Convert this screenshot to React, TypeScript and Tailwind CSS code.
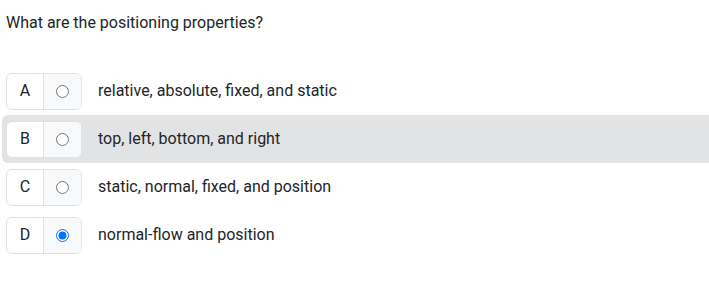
const options = [
  { key: 'A', text: 'relative, absolute, fixed, and static' },
  { key: 'B', text: 'top, left, bottom, and right' },
  { key: 'C', text: 'static, normal, fixed, and position' },
  { key: 'D', text: 'normal-flow and position' },
];

const App = () => {
  const hovered = 'B';
  const selected = 'D';

  return (
    <div className="w-[709px] h-[290px] bg-white text-[#212529] font-['Roboto',sans-serif] overflow-hidden">
      <p className="pl-[6px] pt-[11px] text-[16px] leading-[24px]">What are the positioning properties?</p>

      <div className="mt-[32px] pl-[2px]">
        {options.map((o) => (
          <div
            key={o.key}
            className={`flex items-center h-[48px] pl-[4px] rounded-l-[6px] ${o.key === hovered ? 'bg-[#e2e3e5]' : ''}`}
          >
            <div className="flex h-[37px] w-[76px] border border-[#dee2e6] rounded-[6px] overflow-hidden bg-white">
              <div className="w-[37px] flex items-center justify-center text-[16px] border-r border-[#dee2e6]">
                {o.key}
              </div>
              <div className="flex-1 flex items-center justify-center bg-[#f8f9fa]">
                <input
                  type="radio"
                  name="answer"
                  checked={o.key === selected}
                  readOnly
                  className="m-0 w-[13px] h-[13px]"
                />
              </div>
            </div>
            <span className="ml-[16px] text-[16px]">{o.text}</span>
          </div>
        ))}
      </div>
    </div>
  );
};

export default App;
